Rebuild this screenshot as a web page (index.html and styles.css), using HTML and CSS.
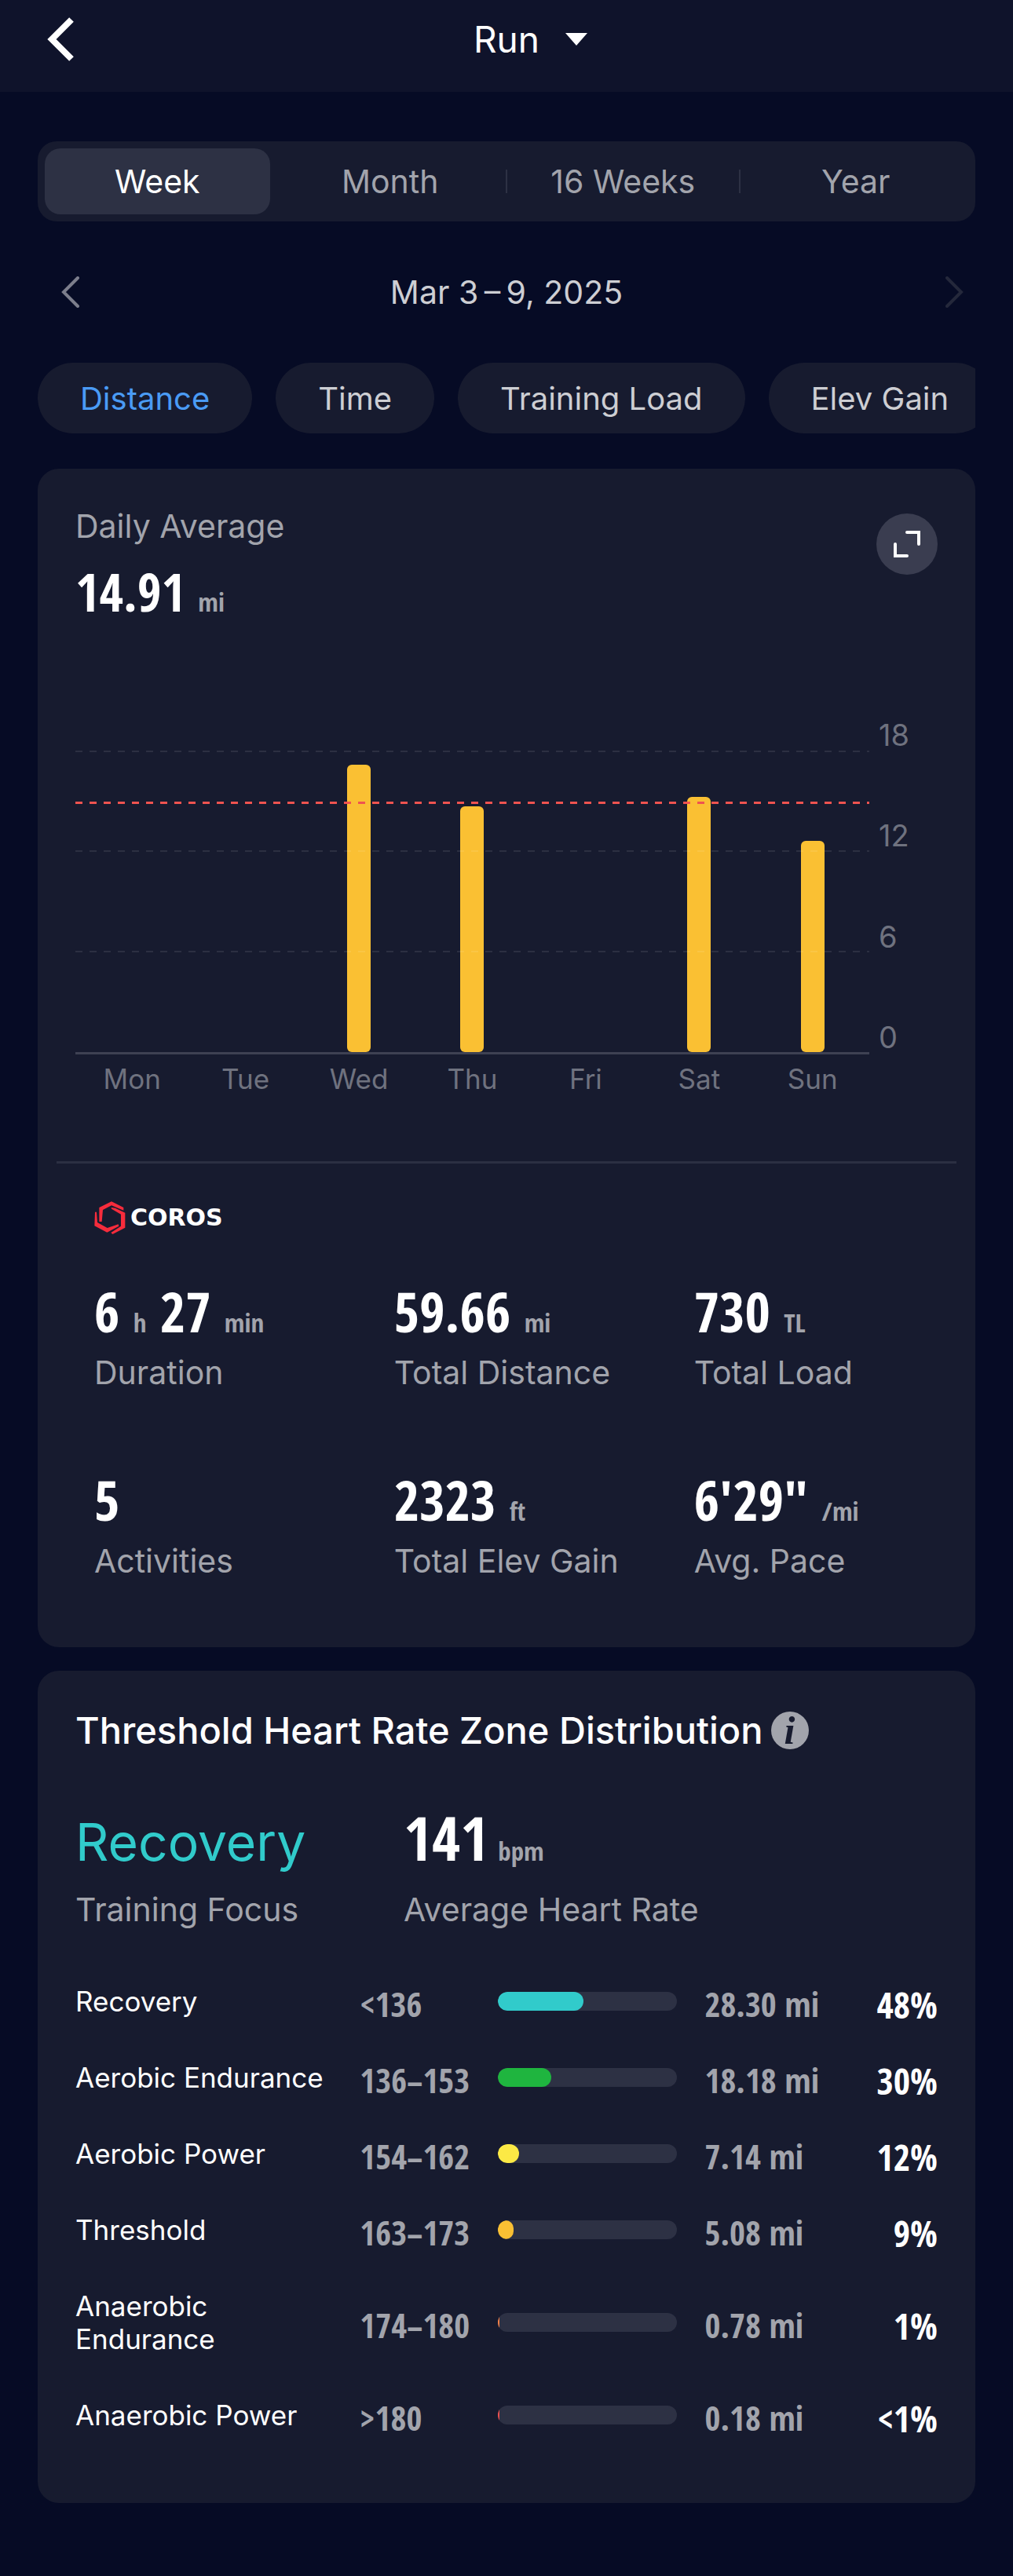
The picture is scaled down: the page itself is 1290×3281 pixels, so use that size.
FILE: index.html
```html
<!DOCTYPE html>
<html lang="en">
<head>
  <meta charset="UTF-8">
  <meta name="viewport" content="width=device-width, initial-scale=1">
  <title>Run</title>
  <link rel="stylesheet" href="styles.css">
</head>
<body>
  <header class="topbar">
    <button class="icon-button back" aria-label="Back">
      <svg width="34" height="56" viewBox="0 0 34 56"><path d="M31 3 6 28l25 25" fill="none" stroke="#fff" stroke-width="8"/></svg>
    </button>
    <div class="sport">
      <select class="sport__select" aria-label="Sport">
        <option>Run</option>
      </select>
    </div>
  </header>

  <main class="page">
    <nav class="tabs">
      <button class="tabs__item tabs__item--active">Week</button>
      <button class="tabs__item">Month</button>
      <button class="tabs__item tabs__item--divided">16 Weeks</button>
      <button class="tabs__item tabs__item--divided">Year</button>
    </nav>

    <div class="period">
      <button class="icon-button period__prev" aria-label="Previous week">
        <svg width="24" height="40" viewBox="0 0 24 40"><path d="M21 2 3 20l18 18" fill="none" stroke="currentColor" stroke-width="4" stroke-linecap="round"/></svg>
      </button>
      <span class="period__label">Mar 3&thinsp;–&thinsp;9, 2025</span>
      <button class="icon-button period__next" aria-label="Next week" disabled>
        <svg width="24" height="40" viewBox="0 0 24 40"><path d="M3 2l18 18L3 38" fill="none" stroke="currentColor" stroke-width="4" stroke-linecap="round"/></svg>
      </button>
    </div>

    <div class="chips">
      <button class="chip chip--active">Distance</button>
      <button class="chip">Time</button>
      <button class="chip">Training Load</button>
      <button class="chip">Elev Gain</button>
    </div>

    <section class="card">
      <div class="summary">
        <div>
          <div class="label">Daily Average</div>
          <div class="value value--average">14.91 <small>mi</small></div>
        </div>
        <button class="icon-button expand" aria-label="Expand chart">
          <svg width="36" height="36" viewBox="0 0 36 36"><path d="M18 3h15v15M3 18v15h15" fill="none" stroke="#fff" stroke-width="4" stroke-linecap="round"/></svg>
        </button>
      </div>

      <div class="chart">
        <div class="plot">
          <div class="plot__line" style="bottom: 33.3%"></div>
          <div class="plot__line" style="bottom: 66.7%"></div>
          <div class="plot__line" style="bottom: 100%"></div>
          <div class="bar" style="height: 0%"></div>
          <div class="bar" style="height: 0%"></div>
          <div class="bar" style="height: 95.7%"></div>
          <div class="bar" style="height: 82%"></div>
          <div class="bar" style="height: 0%"></div>
          <div class="bar" style="height: 85%"></div>
          <div class="bar" style="height: 70.4%"></div>
          <div class="plot__average" style="bottom: 82.8%"></div>
        </div>
        <div class="scale">
          <span>18</span>
          <span>12</span>
          <span>6</span>
          <span>0</span>
        </div>
        <div class="days">
          <span>Mon</span>
          <span>Tue</span>
          <span>Wed</span>
          <span>Thu</span>
          <span>Fri</span>
          <span>Sat</span>
          <span>Sun</span>
        </div>
      </div>

      <hr class="divider">

      <div class="brand">
        <svg width="40" height="42" viewBox="0 0 120 126" fill="#f62c3c">
          <path d="M19 78V24L66 1l46 23v11L66 16 33 33l-4 45z"/>
          <path d="M65 24l15 2 38 18v57l-48 25-6-6 38-25V50L66 29z"/>
          <path d="M3 41h6l3 40 38 21 42-14 2 7-45 24L1 94z"/>
        </svg>
        <span class="brand__name">COROS</span>
      </div>

      <div class="stats">
        <div>
          <div class="value">6 <small>h</small> 27 <small>min</small></div>
          <div class="label">Duration</div>
        </div>
        <div>
          <div class="value">59.66 <small>mi</small></div>
          <div class="label">Total Distance</div>
        </div>
        <div>
          <div class="value">730 <small>TL</small></div>
          <div class="label">Total Load</div>
        </div>
        <div>
          <div class="value">5</div>
          <div class="label">Activities</div>
        </div>
        <div>
          <div class="value">2323 <small>ft</small></div>
          <div class="label">Total Elev Gain</div>
        </div>
        <div>
          <div class="value">6'29" <small>/mi</small></div>
          <div class="label">Avg. Pace</div>
        </div>
      </div>
    </section>

    <section class="card card--zones">
      <div class="heading">
        <h2>Threshold Heart Rate Zone Distribution</h2>
        <button class="icon-button info" aria-label="About heart rate zones">i</button>
      </div>

      <div class="focus">
        <div class="focus__name">Recovery</div>
        <div class="value value--bpm">141<small>bpm</small></div>
        <div class="label">Training Focus</div>
        <div class="label">Average Heart Rate</div>
      </div>

      <table class="zones">
        <tr>
          <th scope="row">Recovery</th>
          <td class="zones__range">&lt;136</td>
          <td class="zones__bar"><div class="track"><div class="track__fill track__fill--recovery" style="width: 48%"></div></div></td>
          <td class="zones__distance">28.30 mi</td>
          <td class="zones__percent">48%</td>
        </tr>
        <tr>
          <th scope="row">Aerobic Endurance</th>
          <td class="zones__range">136–153</td>
          <td class="zones__bar"><div class="track"><div class="track__fill track__fill--endurance" style="width: 30%"></div></div></td>
          <td class="zones__distance">18.18 mi</td>
          <td class="zones__percent">30%</td>
        </tr>
        <tr>
          <th scope="row">Aerobic Power</th>
          <td class="zones__range">154–162</td>
          <td class="zones__bar"><div class="track"><div class="track__fill track__fill--power" style="width: 12%"></div></div></td>
          <td class="zones__distance">7.14 mi</td>
          <td class="zones__percent">12%</td>
        </tr>
        <tr>
          <th scope="row">Threshold</th>
          <td class="zones__range">163–173</td>
          <td class="zones__bar"><div class="track"><div class="track__fill track__fill--threshold" style="width: 9%"></div></div></td>
          <td class="zones__distance">5.08 mi</td>
          <td class="zones__percent">9%</td>
        </tr>
        <tr>
          <th scope="row">Anaerobic Endurance</th>
          <td class="zones__range">174–180</td>
          <td class="zones__bar"><div class="track"><div class="track__fill track__fill--anaerobic" style="width: 1%"></div></div></td>
          <td class="zones__distance">0.78 mi</td>
          <td class="zones__percent">1%</td>
        </tr>
        <tr>
          <th scope="row">Anaerobic Power</th>
          <td class="zones__range">&gt;180</td>
          <td class="zones__bar"><div class="track"><div class="track__fill track__fill--max" style="width: 1%"></div></div></td>
          <td class="zones__distance">0.18 mi</td>
          <td class="zones__percent">&lt;1%</td>
        </tr>
      </table>
    </section>
  </main>
</body>
</html>
```
FILE: styles.css
```css
*, *:before, *:after {
  box-sizing: border-box;
}

body {
  margin: 0;
  background: #060b25;
  color: white;
  font-family: Inter, "Liberation Sans", sans-serif;
  font-size: 41px;
}

button, select {
  border: 0;
  margin: 0;
  padding: 0;
  background: none;
  color: inherit;
  font: inherit;
  cursor: pointer;
}

.icon-button {
  display: flex;
  align-items: center;
  justify-content: center;
}

/* top bar */

.topbar {
  display: grid;
  grid-template-columns: 1fr auto 1fr;
  align-items: center;
  padding: 0 60px 17px;
  background: #0f132b;
}

.back {
  justify-self: start;
  height: 100px;
}

.sport {
  position: relative;
}

.sport__select {
  appearance: none;
  padding: 0 61px;
  font-size: 46px;
  line-height: 60px;
}

.sport:after {
  content: '';
  position: absolute;
  top: 22px;
  right: 0;
  border: 14px solid transparent;
  border-top: 16px solid white;
  border-bottom: 0;
  pointer-events: none;
}

.page {
  padding: 63px 48px 90px;
}

/* week / month / year */

.tabs {
  display: grid;
  grid-template-columns: repeat(4, 1fr);
  gap: 10px;
  padding: 9px;
  border-radius: 24px;
  background: #171b2f;
}

.tabs__item {
  position: relative;
  height: 84px;
  border-radius: 20px;
  color: #a2a4ac;
}

.tabs__item--active {
  background: #2d3144;
  color: white;
}

.tabs__item--divided:before {
  content: '';
  position: absolute;
  top: 27px;
  left: -6px;
  width: 2px;
  height: 30px;
  background: #2d3144;
}

.period {
  display: grid;
  grid-template-columns: 1fr auto 1fr;
  align-items: center;
  height: 180px;
  color: #cdced3;
}

.period__prev {
  justify-self: start;
  margin-left: 30px;
  color: #7c7e8c;
}

.period__next {
  justify-self: end;
  margin-right: 15px;
  color: #24283b;
}

.chips {
  display: flex;
  gap: 30px;
  margin-bottom: 45px;
  overflow: hidden;
}

.chip {
  flex: none;
  height: 90px;
  padding: 0 54px;
  border-radius: 45px;
  background: #171b2f;
  color: #cdced3;
  font-size: 40px;
}

.chip--active {
  color: #4a9bf5;
}

/* cards */

.card {
  margin-bottom: 30px;
  padding: 48px 0 85px;
  border-radius: 27px;
  background: #171b2f;
}

.card:last-child {
  margin-bottom: 0;
}

.label {
  color: #a2a4ac;
  line-height: 50px;
}

.value {
  font-family: "Open Sans Condensed", "Roboto Condensed", "Open Sans", sans-serif;
  font-size: 70px;
  font-weight: 700;
  line-height: 80px;
  white-space: nowrap;
}

.value small {
  color: #a2a4ac;
  font-size: 33px;
  line-height: 1;
}

.summary {
  display: flex;
  justify-content: space-between;
  align-items: flex-start;
  padding: 0 48px;
}

.value--average {
  margin-top: 18px;
  font-size: 66px;
}

.expand {
  width: 78px;
  height: 78px;
  margin-top: 9px;
  border-radius: 50%;
  background: #3a3d50;
}

/* chart */

.chart {
  display: grid;
  grid-template-columns: 1fr 75px;
  column-gap: 12px;
  margin-top: 121px;
  padding: 0 48px;
  color: #6f727f;
  font-size: 35px;
  line-height: 44px;
}

.plot {
  position: relative;
  display: grid;
  grid-template-columns: repeat(7, 1fr);
  align-items: end;
  justify-items: center;
  height: 385px;
  margin-top: 44px;
  border-bottom: 3px solid #3e4153;
}

.plot__line {
  position: absolute;
  left: 0;
  right: 0;
  height: 2px;
  background: repeating-linear-gradient(90deg, rgba(255,255,255,0.09) 0 9px, transparent 9px 18px);
}

.plot__average {
  position: absolute;
  left: 0;
  right: 0;
  height: 3px;
  background: repeating-linear-gradient(90deg, #ef5350 0 9px, transparent 9px 18px);
}

.bar {
  width: 30px;
  border-radius: 6px;
  background: #fac033;
}

.scale {
  display: flex;
  flex-direction: column;
  justify-content: space-between;
  font-size: 38px;
}

.days {
  display: grid;
  grid-template-columns: repeat(7, 1fr);
  margin-top: 9px;
  text-align: center;
}

.divider {
  height: 3px;
  margin: 83px 24px 48px;
  border: 0;
  background: #2b2f42;
}

.brand {
  display: flex;
  align-items: center;
  gap: 6px;
  padding: 0 72px;
}

.brand__name {
  font-family: "DejaVu Sans", sans-serif;
  font-size: 30px;
  font-weight: 700;
  line-height: 42px;
}

.stats {
  display: grid;
  grid-template-columns: 4fr 4fr 3fr;
  row-gap: 97px;
  margin-top: 58px;
  padding: 0 72px;
}

.stats .label {
  margin-top: 13px;
}

/* heart rate zones */

.card--zones {
  padding: 48px 48px 36px;
}

.heading {
  display: flex;
  align-items: center;
  gap: 10px;
}

.heading h2 {
  margin: 0;
  font-size: 47px;
  font-weight: 500;
  line-height: 56px;
}

.info {
  width: 48px;
  height: 48px;
  border-radius: 50%;
  background: #a2a4ac;
  color: #171b2f;
  font-family: "Liberation Serif", serif;
  font-size: 50px;
  font-style: italic;
  font-weight: 700;
  line-height: 46px;
}

.focus {
  display: grid;
  grid-template-columns: 418px 1fr;
  align-items: baseline;
  row-gap: 17px;
  margin-top: 58px;
}

.focus__name {
  color: #31cbcb;
  font-size: 66px;
}

.value--bpm {
  font-size: 78px;
  line-height: 100px;
}

.value--bpm small {
  margin-left: 12px;
}

.zones {
  width: 100%;
  margin-top: 71px;
  border-collapse: collapse;
  table-layout: fixed;
  line-height: 42px;
}

.zones th,
.zones td {
  padding: 0 0 55px;
  text-align: left;
}

.zones th {
  width: 33%;
  padding-right: 24px;
  font-size: 35px;
  font-weight: 400;
}

.zones td {
  padding: 4px 0 51px;
  color: #a2a4ac;
  font-family: "Open Sans Condensed", "Roboto Condensed", "Open Sans", sans-serif;
  font-size: 43px;
  font-weight: 700;
  white-space: nowrap;
}

.zones__range {
  width: 16%;
}

.zones .zones__bar {
  width: 24%;
  padding: 0 36px 55px 0;
}

.zones__distance {
  width: 15%;
}

.zones .zones__percent {
  color: white;
  font-size: 46px;
  text-align: right;
}

.track {
  height: 24px;
  border-radius: 12px;
  background: #2d3144;
  overflow: hidden;
}

.track__fill {
  height: 24px;
  border-radius: 12px;
}

.track__fill--recovery {
  background: #31cbcb;
}

.track__fill--endurance {
  background: #1fb53f;
}

.track__fill--power {
  background: #fce945;
}

.track__fill--threshold {
  background: #fac033;
}

.track__fill--anaerobic {
  background: #f5824a;
}

.track__fill--max {
  background: #f0504f;
}
```
